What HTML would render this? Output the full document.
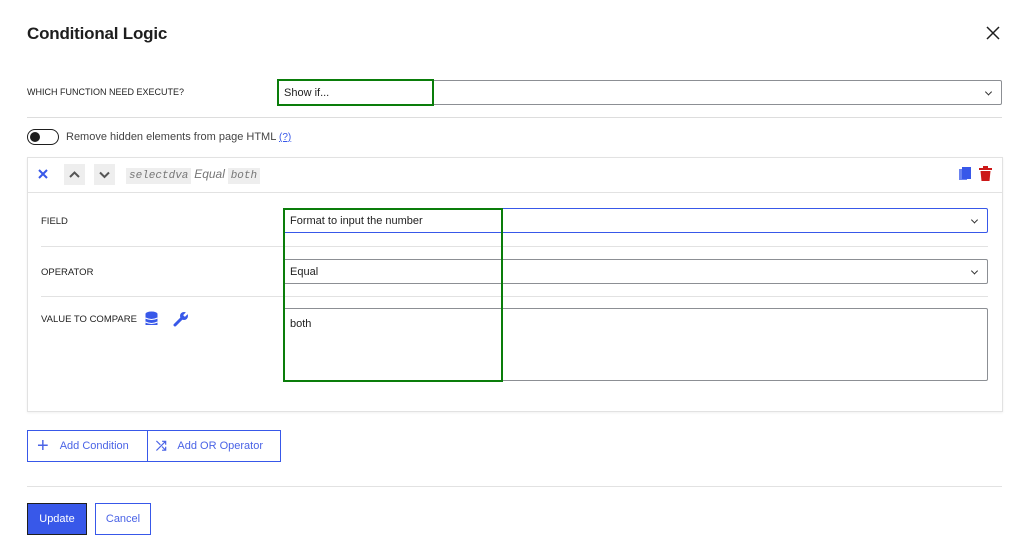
<!DOCTYPE html><html><head><style>
*{box-sizing:border-box;margin:0;padding:0}
body{width:1024px;height:551px;background:#fff;font-family:"Liberation Sans",sans-serif;position:relative;overflow:hidden;color:#1e1e1e}
.a{position:absolute}
.lbl{font-size:10px;color:#1e1e1e}
.sel{border:1px solid #8c8f94;border-radius:2px;font-size:11px;padding-left:6px;display:flex;align-items:center;background:#fff}
.chev{position:absolute;right:10px;top:50%;width:5px;height:5px;border-right:1.8px solid #333;border-bottom:1.8px solid #333;transform:translateY(-70%) rotate(45deg)}
.tag{background:#eee;font-family:"Liberation Mono",monospace;font-style:italic;font-size:11px;color:#777;padding:2px 3px}
.btn{border:1px solid #3858e9;color:#4a63e6;font-size:11px;display:flex;align-items:center;background:#fff}
</style></head><body>
<div class="a" style="left:27px;top:24px;font-size:17px;color:#1e1e1e;font-weight:bold;letter-spacing:-0.2px">Conditional Logic</div>
<svg class="a" style="left:986px;top:26px" width="14" height="14"><path d="M1 1L13 13M13 1L1 13" stroke="#1e1e1e" stroke-width="1.5"/></svg>
<div class="a lbl" style="left:27px;top:87px;font-size:9px">WHICH FUNCTION NEED EXECUTE?</div>
<div class="a sel" style="left:277px;top:80px;width:725px;height:25px">Show if...<span class="chev"></span></div>
<div class="a" style="left:277px;top:79px;width:157px;height:27px;border:2px solid #0a7d0a"></div>
<div class="a" style="left:27px;top:117px;width:975px;height:1px;background:#ddd"></div>
<div class="a" style="left:27px;top:129px;width:32px;height:16px;border:1.5px solid #1e1e1e;border-radius:8px"><div style="position:absolute;left:2px;top:2px;width:10px;height:10px;border-radius:50%;background:#1e1e1e"></div></div>
<div class="a" style="left:66px;top:131px;font-size:11px;color:#444">Remove hidden elements from page HTML <span style="color:#3858e9;text-decoration:underline;font-size:10px">(?)</span></div>
<div class="a" style="left:27px;top:157px;width:976px;height:255px;border:1px solid #e2e2e2;box-shadow:0 1px 2px rgba(0,0,0,.06)"></div>
<div class="a" style="left:28px;top:192px;width:974px;height:1px;background:#e2e2e2"></div>
<svg class="a" style="left:38px;top:169px" width="10" height="10"><path d="M1 1L9 9M9 1L1 9" stroke="#3858e9" stroke-width="2"/></svg>
<div class="a" style="left:64px;top:164px;width:21px;height:21px;background:#eee"><svg width="21" height="21"><path d="M6 13L10.5 8.5L15 13" stroke="#555" stroke-width="2" fill="none"/></svg></div>
<div class="a" style="left:94px;top:164px;width:21px;height:21px;background:#eee"><svg width="21" height="21"><path d="M6 8.5L10.5 13L15 8.5" stroke="#555" stroke-width="2" fill="none"/></svg></div>
<div class="a" style="left:126px;top:167px;font-size:10px;color:#777"><span class="tag">selectdva</span> <span style="font-style:italic;font-size:12px">Equal</span> <span class="tag">both</span></div>
<svg class="a" style="left:958px;top:166px" width="14" height="16"><rect x="1" y="3" width="8" height="11" fill="#6b83f0"/><rect x="4" y="1" width="9" height="12" fill="#3858e9"/></svg>
<svg class="a" style="left:979px;top:166px" width="13" height="16"><rect x="0" y="2" width="13" height="2" fill="#cc1818"/><rect x="4" y="0" width="5" height="2" fill="#cc1818"/><path d="M1.5 5H11.5L10.5 15H2.5Z" fill="#cc1818"/></svg>
<div class="a lbl" style="left:41px;top:216px;font-size:9.5px">FIELD</div>
<div class="a sel" style="left:283px;top:208px;width:705px;height:25px;border-color:#3858e9;border-width:1.5px">Format to input the number<span class="chev"></span></div>
<div class="a" style="left:41px;top:246px;width:947px;height:1px;background:#e2e2e2"></div>
<div class="a lbl" style="left:41px;top:267px;font-size:9.5px">OPERATOR</div>
<div class="a sel" style="left:283px;top:259px;width:705px;height:25px">Equal<span class="chev"></span></div>
<div class="a" style="left:41px;top:296px;width:947px;height:1px;background:#e2e2e2"></div>
<div class="a lbl" style="left:41px;top:314px;font-size:9.5px">VALUE TO COMPARE</div>
<svg class="a" style="left:145px;top:311px" width="13" height="16"><ellipse cx="6.5" cy="3" rx="6" ry="2.5" fill="#3858e9"/><rect x="0.5" y="3" width="12" height="11" fill="#3858e9"/><path d="M0.5 7Q6.5 10 12.5 7M0.5 11Q6.5 14 12.5 11" stroke="#fff" fill="none"/></svg>
<svg class="a" style="left:173px;top:311px" width="16" height="16"><path d="M2 14L9 7" stroke="#3858e9" stroke-width="3" stroke-linecap="round"/><circle cx="11" cy="5" r="4" fill="#3858e9"/><path d="M11 5L14 2" stroke="#fff" stroke-width="2.5"/></svg>
<div class="a sel" style="left:283px;top:308px;width:705px;height:73px;align-items:flex-start;padding-top:9px">both</div>
<div class="a" style="left:283px;top:208px;width:220px;height:174px;border:2px solid #0a7d0a"></div>
<div class="a btn" style="left:27px;top:430px;width:121px;height:32px;padding-left:9px"><span style="font-size:20px;margin-right:11px;font-weight:300">+</span>Add Condition</div>
<div class="a btn" style="left:147px;top:430px;width:134px;height:32px;padding-left:8px"><span style="font-size:13px;margin-right:11px;font-weight:bold">⤮</span>Add OR Operator</div>
<div class="a" style="left:27px;top:486px;width:975px;height:1px;background:#e2e2e2"></div>
<div class="a" style="left:27px;top:503px;width:60px;height:32px;background:#3858e9;border:1px solid #1e1e1e;color:#fff;font-size:11px;display:flex;align-items:center;justify-content:center">Update</div>
<div class="a btn" style="left:95px;top:503px;width:56px;height:32px;justify-content:center">Cancel</div>
</body></html>
